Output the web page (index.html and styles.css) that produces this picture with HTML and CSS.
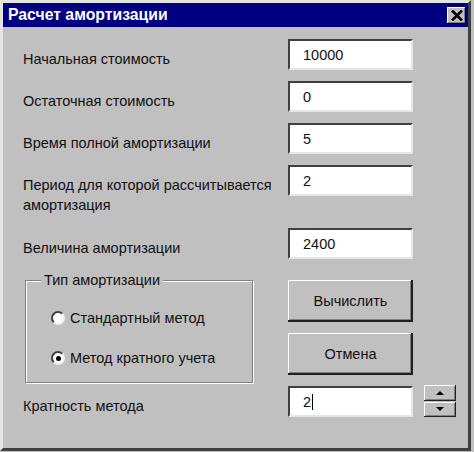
FILE: index.html
```html
<!DOCTYPE html>
<html lang="ru">
<head>
    <meta charset="UTF-8">
    <title>Расчет амортизации</title>
    <link rel="stylesheet" href="styles.css">
</head>
<body>
    <div class="window">
        <div class="titlebar">
            <span class="title">Расчет амортизации</span>
            <div class="close">
                <svg width="12" height="11" viewBox="0 0 12 11">
                    <path d="M1 0.5 L11 10.5 M11 0.5 L1 10.5" stroke="#000" stroke-width="2.6" fill="none"/>
                </svg>
            </div>
        </div>

        <div class="content">
            <div class="row">
                <div class="label">Начальная стоимость</div>
                <div class="field">10000</div>
            </div>
            <div class="row">
                <div class="label">Остаточная стоимость</div>
                <div class="field">0</div>
            </div>
            <div class="row">
                <div class="label">Время полной амортизации</div>
                <div class="field">5</div>
            </div>
            <div class="row row-tall">
                <div class="label">Период для которой рассчитывается<br>амортизация</div>
                <div class="field">2</div>
            </div>
            <div class="row row-last">
                <div class="label">Величина амортизации</div>
                <div class="field">2400</div>
            </div>

            <div class="middle">
                <div class="group">
                    <span class="legend">Тип амортизации</span>
                    <div class="option"><span class="radio"></span>Стандартный метод</div>
                    <div class="option"><span class="radio checked"></span>Метод кратного учета</div>
                </div>
                <div class="buttons">
                    <div class="btn">Вычислить</div>
                    <div class="btn">Отмена</div>
                </div>
            </div>

            <div class="row">
                <div class="label">Кратность метода</div>
                <div class="field">2<span class="caret"></span></div>
                <div class="spinner">
                    <div class="spin"><span class="arrow-up"></span></div>
                    <div class="spin"><span class="arrow-down"></span></div>
                </div>
            </div>
        </div>
    </div>
</body>
</html>
```
FILE: styles.css
```css
body {
    margin: 0;
    background: #c0c0c0;
    font-family: "Liberation Sans", Arial, sans-serif;
    font-size: 14.5px;
    color: #111;
}

.window {
    width: 465px;
    height: 445px;
    border: 3px solid;
    border-color: #e4e4e4 #404040 #404040 #e4e4e4;
    background: #c0c0c0;
}

.titlebar {
    height: 24px;
    background: #000080;
    color: #fff;
    display: flex;
    align-items: center;
    justify-content: space-between;
    padding: 0 2px 0 5px;
}

.title {
    font-weight: bold;
    font-size: 15.8px;
}

.close {
    width: 19px;
    height: 17px;
    margin-top: 1px;
    box-sizing: border-box;
    background: #c0c0c0;
    display: flex;
    align-items: center;
    justify-content: center;
    box-shadow: inset -1px -1px #000, inset 1px 1px #fff, inset -2px -2px #808080;
}

.content {
    padding: 12px 0 0 20px;
}

.row {
    display: flex;
    height: 31px;
    margin-bottom: 11px;
}

.row-tall {
    margin-bottom: 32px;
}

.row-last {
    margin-bottom: 21px;
}

.label {
    width: 265px;
    flex: none;
    padding-top: 10px;
    line-height: 20px;
    white-space: nowrap;
}

.field {
    width: 125px;
    height: 31px;
    box-sizing: border-box;
    background: #fff;
    border: 2px solid;
    border-color: #404040 #e6e6e6 #e6e6e6 #404040;
    padding-left: 13px;
    display: flex;
    align-items: center;
}

.caret {
    width: 1px;
    height: 16px;
    background: #000;
    margin-left: 1px;
}

.middle {
    display: flex;
    margin-left: 2px;
    margin-bottom: 3px;
}

.group {
    position: relative;
    width: 228px;
    height: 103px;
    box-sizing: border-box;
    border: 1px solid #808080;
    box-shadow: 1px 1px 0 #fff, inset 1px 1px 0 #fff;
    padding: 27px 0 0 25px;
}

.legend {
    position: absolute;
    top: -9px;
    left: 15px;
    padding: 0 3px;
    background: #c0c0c0;
    line-height: 16px;
}

.option {
    display: flex;
    align-items: center;
    height: 20px;
    margin-bottom: 20px;
}

.radio {
    width: 10px;
    height: 10px;
    border: 2px solid;
    border-color: #404040 #f0f0f0 #f0f0f0 #404040;
    border-radius: 50%;
    background: #fff;
    margin-right: 5px;
    display: flex;
    align-items: center;
    justify-content: center;
}

.radio.checked::after {
    content: "";
    width: 5px;
    height: 5px;
    border-radius: 50%;
    background: #000;
}

.buttons {
    margin-left: 35px;
    display: flex;
    flex-direction: column;
    gap: 11px;
}

.btn {
    width: 125px;
    height: 42px;
    box-sizing: border-box;
    display: flex;
    align-items: center;
    justify-content: center;
    background: #c0c0c0;
    box-shadow: inset -2px -2px #202020, inset 1px 1px #fff, inset -3px -3px #808080;
}

.spinner {
    margin: -1px 0 0 11px;
    display: flex;
    flex-direction: column;
    gap: 1px;
}

.spin {
    width: 32px;
    height: 16px;
    box-sizing: border-box;
    display: flex;
    align-items: center;
    justify-content: center;
    background: #c0c0c0;
    box-shadow: inset -1px -1px #202020, inset 1px 1px #fff, inset -2px -2px #808080;
}

.arrow-up {
    border-left: 4px solid transparent;
    border-right: 4px solid transparent;
    border-bottom: 4px solid #000;
}

.arrow-down {
    border-left: 4px solid transparent;
    border-right: 4px solid transparent;
    border-top: 4px solid #000;
}
```
